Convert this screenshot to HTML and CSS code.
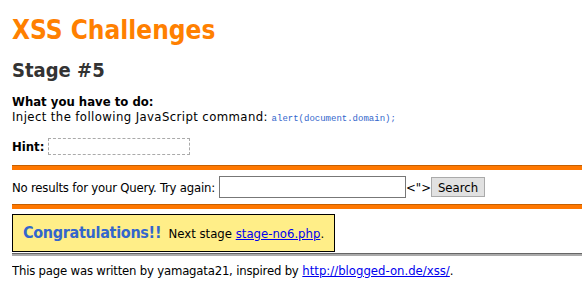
FILE: index.html
```html
<html>

<head>
  <title>
    XSS Challenges (by yamagata21) - Stage #5
  </title>
  <link rel="stylesheet" href="styles.css">
</head>

<body>
  <h1>XSS Challenges</h1>
  <h2>Stage #5</h2>

  <div class="task">
    <b>What you have to do:</b><br>
    <span class="wide">Inject the following JavaScript command:</span> <code>alert(document.domain);</code>
  </div>

  <div class="hint">
    <b>Hint:</b> <span class="hintbox"></span>
  </div>

  <hr class="orange first">
  <form class="search">
    <span class="tight">No results for your Query. Try again:</span>
    <input type="text" name="p1" class="query">&lt;"&gt;
    <input type="submit" value="Search" class="btn">
  </form>
  <hr class="orange">

  <div class="congrats">
    <span class="big">Congratulations!!</span>&nbsp; Next stage <a href="#">stage-no6.php</a>.
  </div>

  <hr class="grey">
  <div class="footer">
    <span class="tight">This page was written by yamagata21, inspired by</span> <a href="#">http://blogged-on.de/xss/</a>.
  </div>
</body>
</html>
```

FILE: styles.css
```css
body {
  margin: 0 0 0 12px;
  padding: 0;
  font-family: "DejaVu Sans Condensed", "DejaVu Sans", Verdana, sans-serif;
  font-size: 13px;
  color: #000;
  background: #fff;
}
h1 {
  margin: 14px 0 0 0;
  font-size: 26px;
  line-height: 32px;
  color: #ff8000;
}
h2 {
  margin: 12px 0 0 0;
  font-size: 20px;
  line-height: 24px;
  color: #333;
}
div.task {
  margin-top: 12px;
  line-height: 15px;
}
span.wide {
  letter-spacing: 0.4px;
}
span.tight {
  letter-spacing: -0.2px;
}
code {
  font-family: "Liberation Mono", monospace;
  font-size: 9px;
  color: #3366cc;
}
div.hint {
  margin-top: 11px;
  display: flex;
  align-items: center;
  gap: 4px;
}
span.hintbox {
  display: inline-block;
  width: 140px;
  height: 15px;
  border: 1px dashed #aaa;
}
hr.orange {
  margin: 0;
  height: 4px;
  border: 0;
  border-top: 1px solid #c66000;
  background: #ff7700;
}
hr.first {
  margin-top: 10px;
}
form.search {
  margin: 0;
  padding: 6px 0 6px 0;
  display: flex;
  align-items: center;
}
input.query {
  margin: 0 0 0 4px;
  width: 187px;
  height: 22px;
  box-sizing: border-box;
  border: 1px solid #777;
  padding: 0;
}
input.btn {
  margin: 0;
  width: 54px;
  height: 20px;
  box-sizing: border-box;
  border: 1px solid #aaa;
  background: #e1e1e1;
  font-family: inherit;
  font-size: 13px;
  padding: 0;
}
div.congrats {
  margin-top: 5px;
  width: 323px;
  height: 38px;
  box-sizing: border-box;
  border: 1px solid #000;
  background: #ffee88;
  padding: 0 0 0 10px;
  line-height: 35px;
  white-space: nowrap;
}
span.big {
  font-size: 16px;
  font-weight: bold;
  letter-spacing: -0.3px;
  color: #3366cc;
}
a {
  color: #0000ee;
}
hr.grey {
  margin: 1px 0 0 0;
  height: 2px;
  border: 0;
  border-top: 1px solid #666;
  background: #aaa;
}
div.footer {
  margin-top: 7px;
}
```
